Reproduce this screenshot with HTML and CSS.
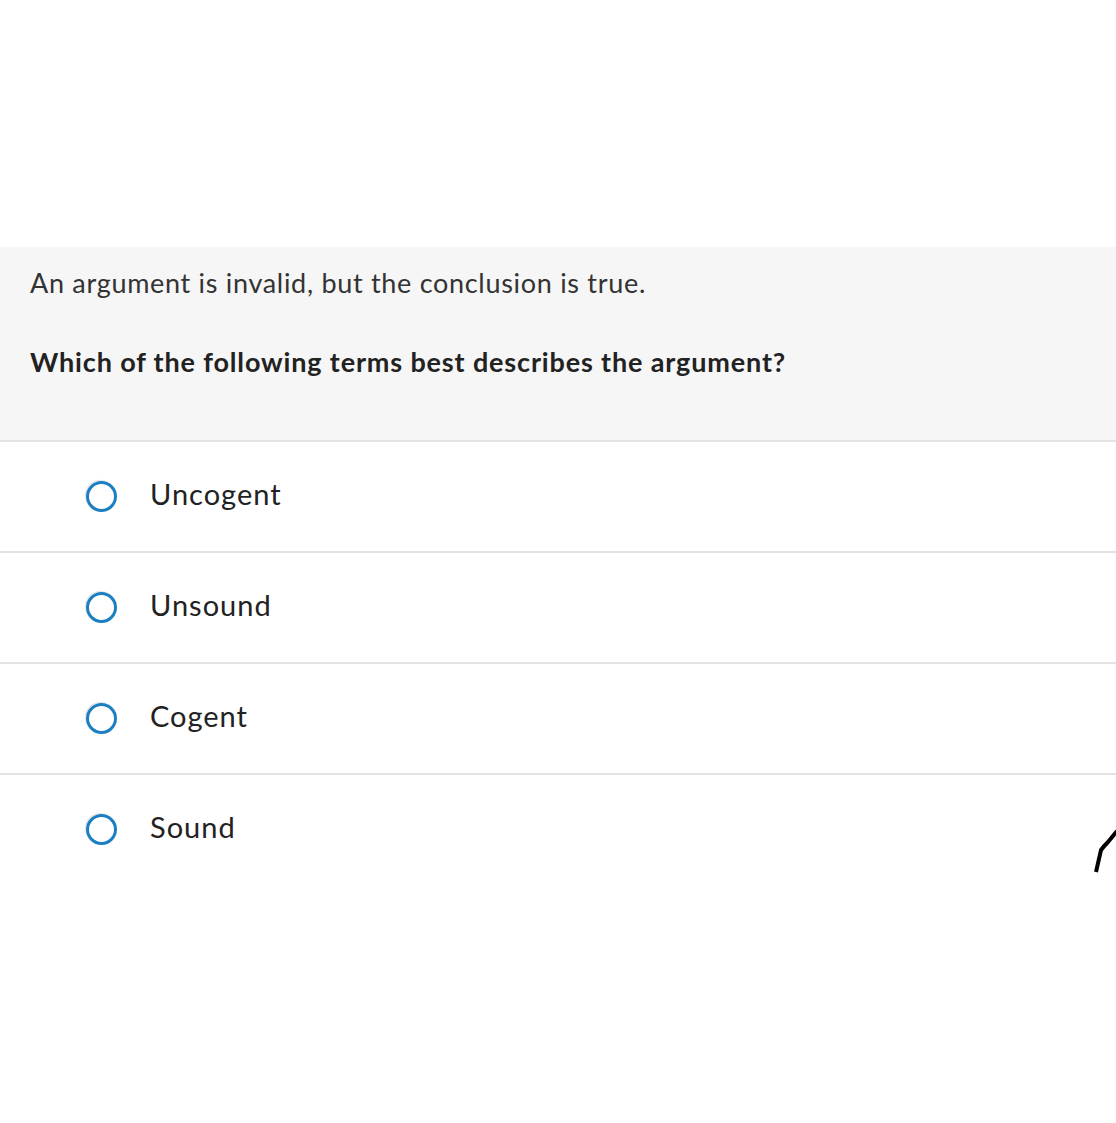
FILE: index.html
```html
<!DOCTYPE html>
<html>
<head>
<meta charset="utf-8">
<link rel="stylesheet" href="styles.css">
</head>
<body>
<div class="page">
  <div class="spacer"></div>
  <section class="prompt">
    <p class="stem">An argument is invalid, but the conclusion is true.</p>
    <p class="ask">Which of the following terms best describes the argument?</p>
  </section>
  <ul class="choices">
    <li class="choice"><span class="radio"></span><span class="label">Uncogent</span></li>
    <li class="choice"><span class="radio"></span><span class="label">Unsound</span></li>
    <li class="choice"><span class="radio"></span><span class="label">Cogent</span></li>
    <li class="choice last"><span class="radio"></span><span class="label">Sound</span></li>
  </ul>
  <svg class="mark" width="30" height="50" viewBox="0 0 30 50"><path d="M8 46 L13 24 Q16 20 20 16 L29 5" fill="none" stroke="#000" stroke-width="4" stroke-linecap="butt" stroke-linejoin="round"/></svg>
</div>
</body>
</html>
```
FILE: styles.css
```css
html, body { margin: 0; padding: 0; background: #fff; }
body { font-family: "Lato", "Open Sans", sans-serif; color: #222; }
.page { position: relative; width: 1116px; height: 1123px; overflow: hidden; }
.spacer { height: 247px; }
.prompt { background: #f6f6f6; padding: 20px 30px 0 30px; height: 173px; border-bottom: 2px solid #e3e3e3; }
.prompt p { margin: 0; font-size: 27px; line-height: 32px; }
.stem { color: #333; letter-spacing: 0.7px; }
.ask { font-weight: 700; margin-top: 47px !important; color: #222; letter-spacing: 0.85px; }
.choices { list-style: none; margin: 0; padding: 0; }
.choice { height: 109px; border-bottom: 2px solid #e3e3e3; display: flex; align-items: center; padding-left: 86px; }
.choice.last { border-bottom: none; }
.radio { width: 25px; height: 25px; border: 3px solid #1b7fc1; border-radius: 50%; box-sizing: content-box; margin-right: 33px; box-shadow: -1px -1px 1px rgba(0,0,0,0.12); }
.label { font-size: 29px; color: #222; letter-spacing: 1px; position: relative; top: -3px; }
.mark { position: absolute; left: 1088px; top: 826px; }
```
